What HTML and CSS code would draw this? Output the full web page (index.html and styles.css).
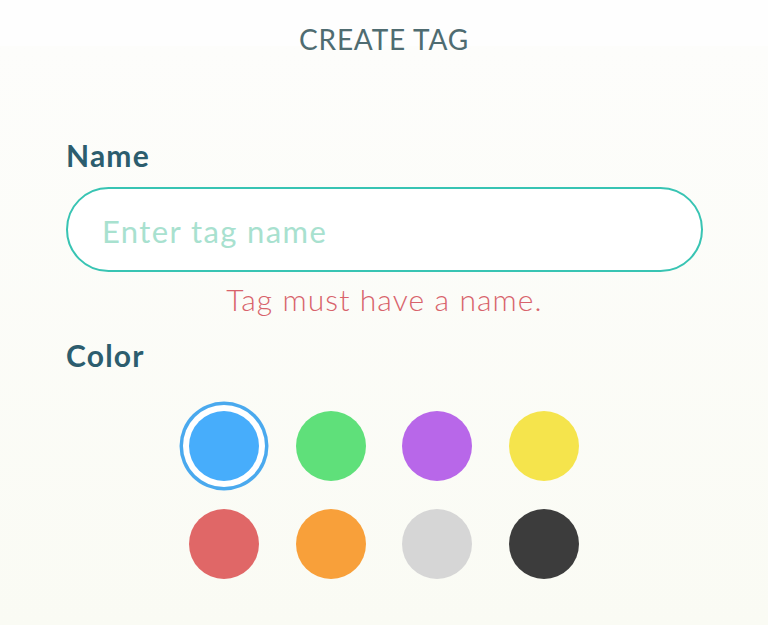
FILE: index.html
```html
<!DOCTYPE html>
<html lang="en">
<head>
<meta charset="utf-8">
<title>Create Tag</title>
<link rel="stylesheet" href="styles.css">
</head>
<body>
<div class="page">
  <header class="title-bar">CREATE TAG</header>
  <main class="form">
    <label class="field-label" for="tag-name">Name</label>
    <input class="name-input" id="tag-name" type="text" placeholder="Enter tag name">
    <p class="error">Tag must have a name.</p>
    <div class="field-label">Color</div>
    <div class="swatches">
      <span class="swatch swatch-blue selected"></span>
      <span class="swatch swatch-green"></span>
      <span class="swatch swatch-purple"></span>
      <span class="swatch swatch-yellow"></span>
      <span class="swatch swatch-red"></span>
      <span class="swatch swatch-orange"></span>
      <span class="swatch swatch-gray"></span>
      <span class="swatch swatch-black"></span>
    </div>
  </main>
</div>
</body>
</html>
```

FILE: styles.css
```css
html, body {
  margin: 0;
  padding: 0;
}

body {
  width: 768px;
  min-height: 625px;
  font-family: Lato, "Noto Sans", sans-serif;
  background: linear-gradient(to bottom, #fefefe 0, #fefefe 46px, #fdfdfb 46px, #fafbf4 625px);
}

.page {
  display: flex;
  flex-direction: column;
}

.title-bar {
  padding-top: 22px;
  font-size: 28px;
  line-height: 34px;
  letter-spacing: 0.8px;
  text-align: center;
  color: #4f6c71;
  font-weight: 400;
}

.form {
  display: flex;
  flex-direction: column;
  padding: 0 65px 0 66px;
}

.field-label {
  display: block;
  font-size: 30px;
  line-height: 34px;
  letter-spacing: 1.2px;
  font-weight: 700;
  color: #2c5d6e;
}

.form > label.field-label {
  margin-top: 82px;
}

.name-input {
  margin-top: 15px;
  box-sizing: border-box;
  width: 637px;
  height: 85px;
  border: 2px solid #38c4b3;
  border-radius: 43px;
  background: #ffffff;
  padding: 2px 0 0 34px;
  font-family: Lato, "Noto Sans", sans-serif;
  font-size: 31px;
  letter-spacing: 1.4px;
  color: #2c5d6e;
  outline: none;
}

.name-input::placeholder {
  color: #a8e1cf;
  opacity: 1;
}

.error {
  margin: 10px 0 22px;
  font-size: 30px;
  line-height: 34px;
  letter-spacing: 1.1px;
  font-weight: 300;
  text-align: center;
  color: #d8636b;
}

.swatches {
  margin: 39px 0 0 -66px;
  width: 768px;
  display: grid;
  grid-template-columns: repeat(4, 106.67px);
  justify-content: center;
  row-gap: 28px;
  justify-items: center;
}

.swatch {
  display: block;
  width: 70px;
  height: 70px;
  border-radius: 50%;
}

.swatch.selected {
  box-shadow: 0 0 0 6px #ffffff, 0 0 0 9.5px #4aa9ee;
}

.swatch-blue { background: #47adfb; }
.swatch-green { background: #5fe07a; }
.swatch-purple { background: #b867e9; }
.swatch-yellow { background: #f5e44c; }
.swatch-red { background: #e06767; }
.swatch-orange { background: #f8a03a; }
.swatch-gray { background: #d6d6d6; }
.swatch-black { background: #3c3c3c; }
```
